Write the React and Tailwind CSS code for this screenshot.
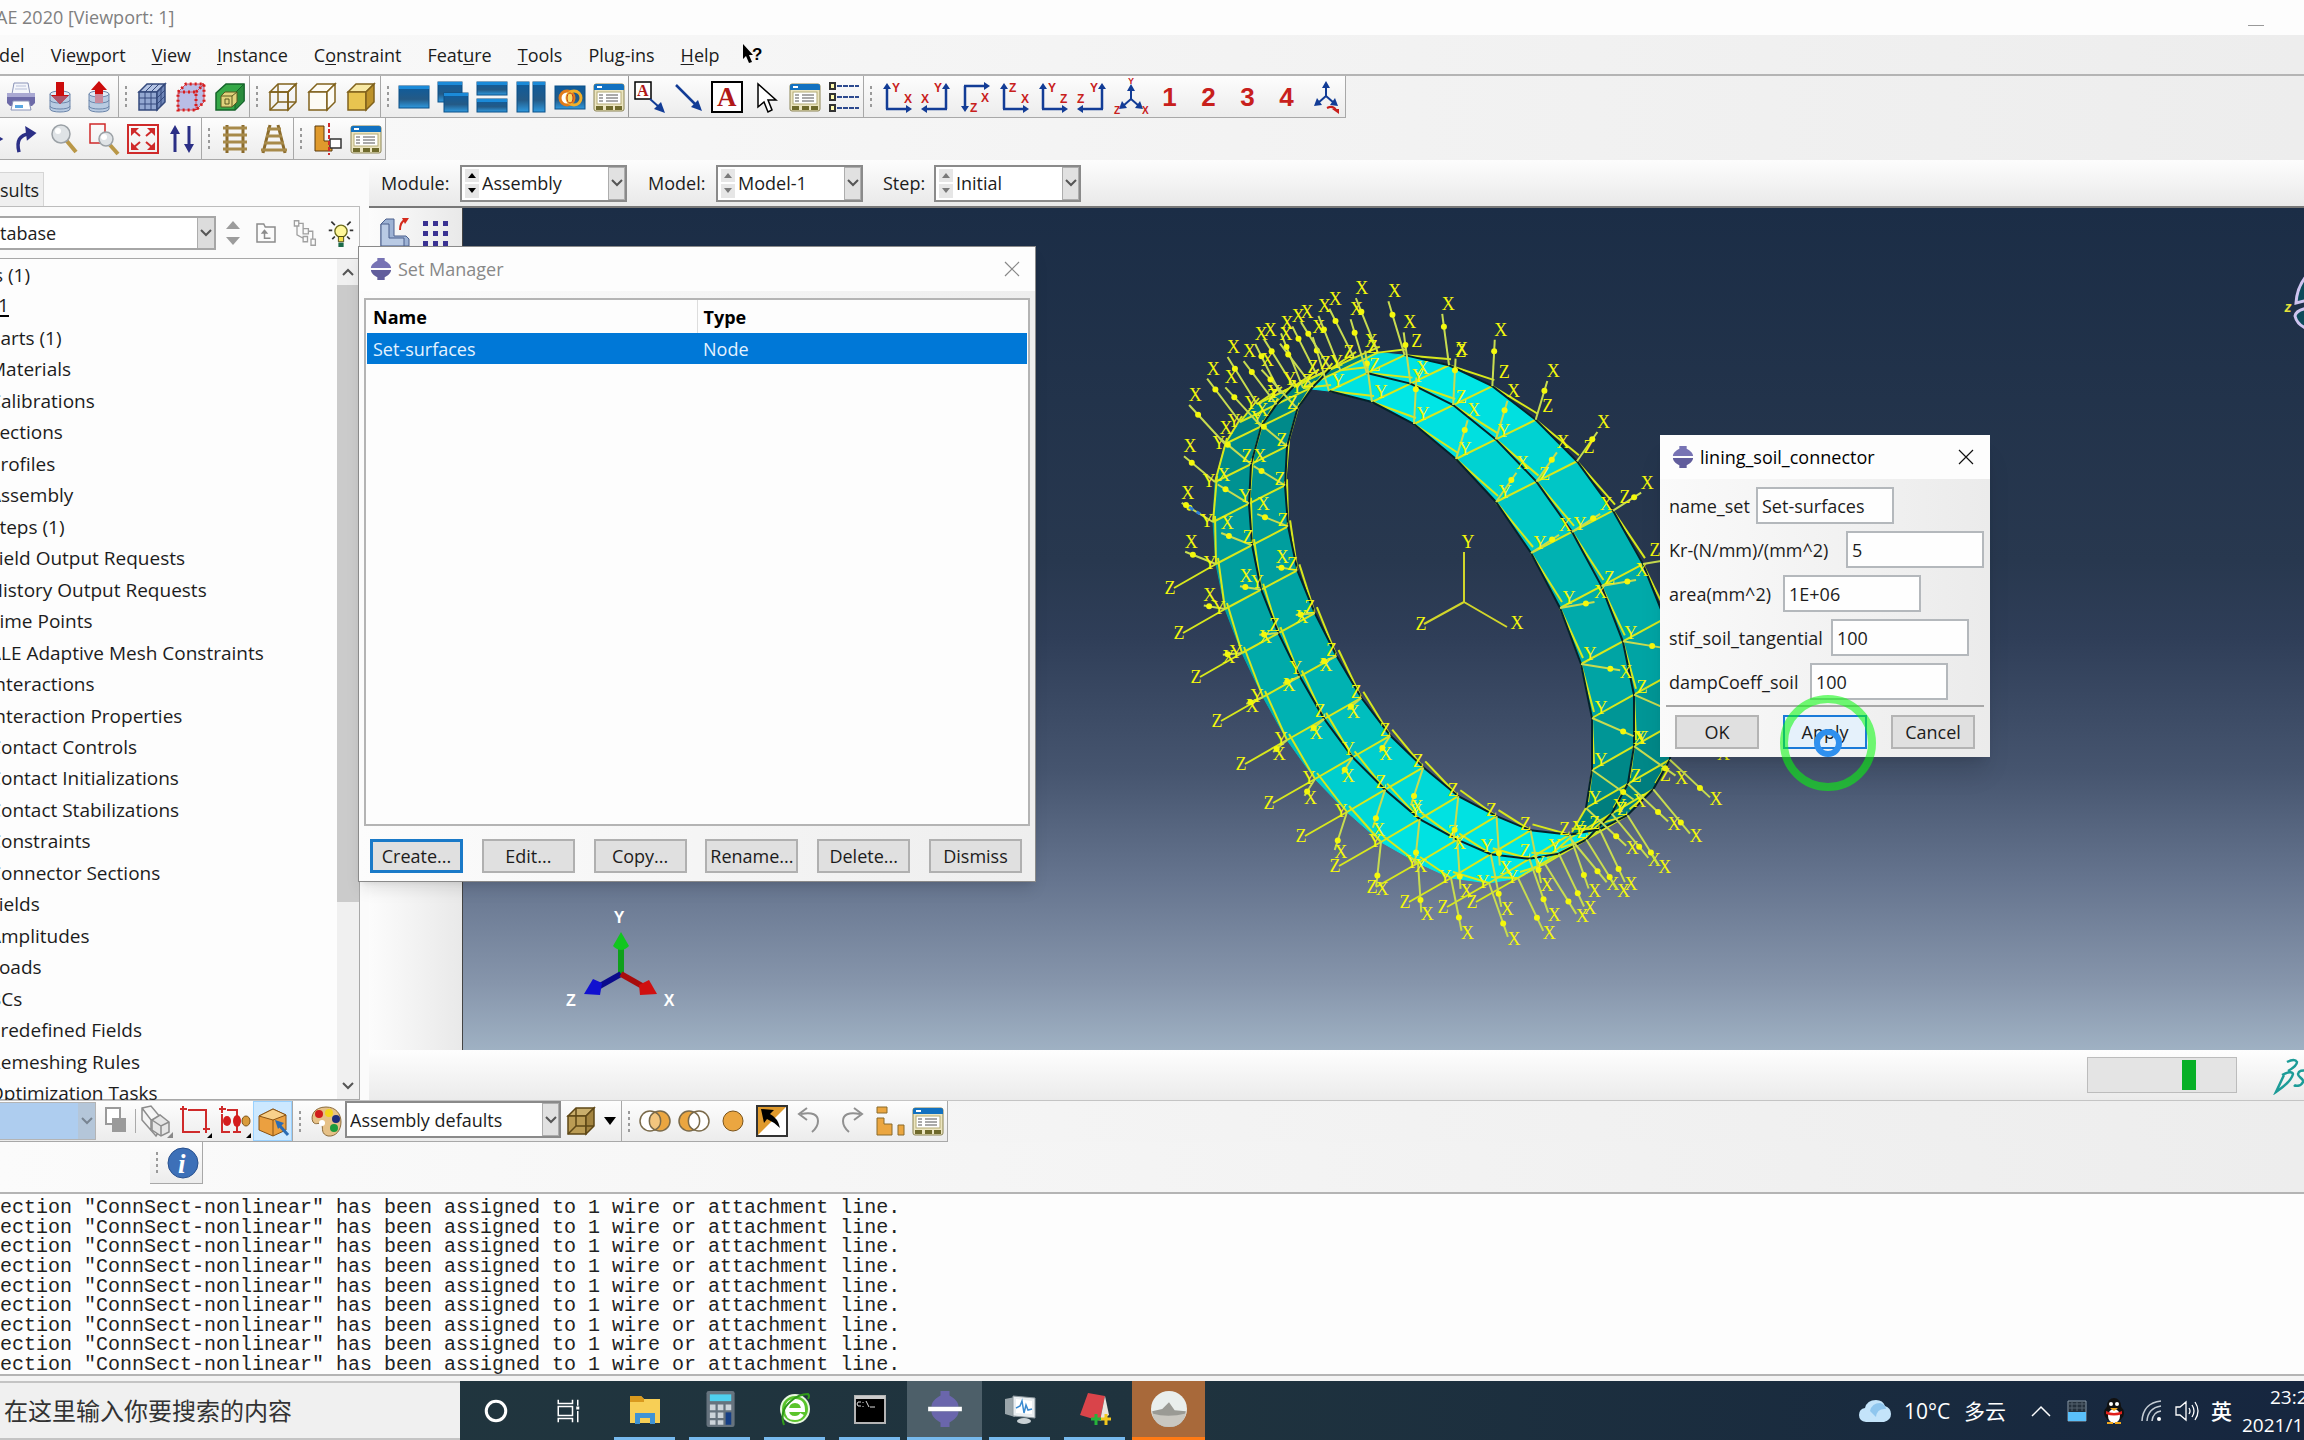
import React from 'react';

const Ico = ({ children, className = 'h-8 w-8' }) => (
    <svg viewBox="0 0 32 32" className={`${className} shrink-0 overflow-visible`} fill="none" aria-hidden="true">
        {children}
    </svg>
);

const ToolButton = ({ label, children, active }) => (
    <button
        type="button"
        aria-label={label}
        className={`flex h-full w-[39px] shrink-0 items-center justify-center ${active ? 'border border-[#99d1ff] bg-[#cce8ff]' : ''}`}
    >
        {children}
    </button>
);

const Grip = () => (
    <div className="flex w-[13px] shrink-0 flex-col items-center justify-center gap-[3px]">
        {[0, 1, 2, 3].map((i) => <span key={i} className="h-[3px] w-[2px] bg-[#9a9a9a]"></span>)}
    </div>
);

const Group = ({ children, grip = true }) => (
    <div className="flex h-full border-r border-b border-[#a8a8a8] bg-gradient-to-b from-[#fdfdfd] to-[#ececec]">
        {grip && <Grip />}
        {children}
    </div>
);

/* ---------- toolbar icons ---------- */

const Printer = () => (
    <Ico>
        <path d="M9 2h14l2 11H7z" fill="#f4f6fb" stroke="#8a93b8" />
        <path d="M11 5h10M10 8h12" stroke="#b8bfd8" />
        <path d="M2 12h28v10l-3 3H5l-3-3z" fill="#6d6aa8" />
        <path d="M2 12h28v4H2z" fill="#a9a8d2" />
        <path d="M8 20h16l2 9H6z" fill="#fff" stroke="#8a93b8" />
        <path d="M10 24h8v3h-8z" fill="#5aa7e0" />
    </Ico>
);

const Disk = ({ up }) => (
    <Ico>
        <path d="M6 13v15c0 4 20 4 20 0V13z" fill="#b9cbe2" stroke="#6c86aa" />
        <ellipse cx="16" cy="13" rx="10" ry="3" fill="#e2ebf6" stroke="#6c86aa" />
        <path d="M6 19c0 4 20 4 20 0M6 25c0 4 20 4 20 0" stroke="#6c86aa" />
        {up ? <path d="M16 0l8 9h-4v12h-8V9H8z" fill="#cc0c0c" /> : <path d="M12 1h8v13h5l-9 9-9-9h5z" fill="#cc0c0c" />}
        {up ? <path d="M12 13h8v9h-8z" fill="#c98a9c" /> : <path d="M8 15h16l-8 8z" fill="#b0546a" />}
    </Ico>
);

const Cube = ({ top, front, side, line, mesh, hidden }) => (
    <Ico>
        <path d="M3 11L11 3h18l-8 8z" fill={top} stroke={line} strokeWidth="1.5" />
        <path d="M3 11h18v18H3z" fill={front} stroke={line} strokeWidth="1.5" />
        <path d="M21 11l8-8v18l-8 8z" fill={side} stroke={line} strokeWidth="1.5" />
        {mesh && <path d="M9 11v18M15 11v18M3 17h18l8-8M3 23h18l8-8M9 11l8-8M15 11l8-8M25 7v18" stroke={line} />}
        {hidden && <path d="M11 3v18h18M11 21l-8 8" stroke={line} strokeWidth="1.5" />}
    </Ico>
);

const RedCube = () => (
    <Ico>
        <path d="M3 11L11 3h18v18l-8 8H3z" fill="#b9bde6" />
        <path d="M3 11L11 3h18v18l-8 8H3zM3 11h18v18M21 11l8-8" stroke="#d64a5a" />
        <path d="M3 11L11 3h18v18l-8 8H3zM3 11h18v18M21 11l8-8" stroke="#d61e1e" strokeWidth="3" strokeDasharray="2 3" />
    </Ico>
);

const GreenCube = () => (
    <Ico>
        <path d="M2 12L12 3h18v17l-9 9H2z" fill="#35a847" stroke="#14632a" strokeWidth="1.5" />
        <path d="M21 12l9-9v17l-9 9z" fill="#2a8c3c" stroke="#14632a" />
        <path d="M7 15l4-4h12v10l-5 5H7z" fill="#e0d27c" stroke="#5a5a20" />
        <path d="M7 15h11v11M18 15l5-4M11 18h4v5h-4z" stroke="#5a5a20" />
    </Ico>
);

const Pane = ({ x, y, w, h }) => (
    <g>
        <rect x={x} y={y} width={w} height={h} fill="url(#paneFill)" stroke="#0a4f86" />
        <rect x={x} y={y} width={w} height="3" fill="#1b8ad8" />
    </g>
);

const TableIcon = () => (
    <Ico>
        <rect x="1" y="3" width="30" height="27" rx="2" fill="#ece5c0" stroke="#8b8455" />
        <path d="M1 9V5q0-2 2-2h26q2 0 2 2v4z" fill="#1271c0" />
        <path d="M4 6h5" stroke="#fff" strokeWidth="2" />
        <rect x="4" y="11" width="24" height="12" fill="#fff" stroke="#b4ab75" />
        <path d="M6 14h4M6 17h4M6 20h4M13 14h12M13 17h12M13 20h12" stroke="#555" />
        <path d="M3 25h7v4H3zM13 25h7v4h-7zM22 25h7v4h-7z" fill="#6f6a2c" />
    </Ico>
);

const Target = () => (
    <Ico>
        <rect x="1" y="5" width="30" height="23" fill="url(#paneFill)" stroke="#0a4f86" />
        <circle cx="13" cy="17" r="7" fill="#fff" stroke="#e07b1a" strokeWidth="3" />
        <circle cx="20" cy="17" r="7" stroke="#f2b02a" strokeWidth="3" />
        <ellipse cx="16" cy="17" rx="3" ry="5" fill="#f9dc6a" stroke="#c23a1a" />
    </Ico>
);

const Letter = ({ x, y, children, size = 12, fill = '#c8201c' }) => (
    <text x={x} y={y} fontSize={size} fontWeight="700" fill={fill} fontFamily='"Liberation Sans", sans-serif'>{children}</text>
);

const axisViews = [
    { d: 'M6 28V6M5 28h22', head: 'M2 8l4-6 4 6zM25 24l6 4-6 4z', l: [['Y', 11, 11], ['X', 23, 22]] },
    { d: 'M26 28V6M27 28H5', head: 'M22 8l4-6 4 6zM7 24l-6 4 6 4z', l: [['Y', 14, 11], ['X', 1, 22]] },
    { d: 'M6 5v22M5 5h22', head: 'M2 25l4 6 4-6zM25 1l6 4-6 4z', l: [['X', 22, 21], ['Z', 11, 31]] },
    { d: 'M6 28V6M5 28h22', head: 'M2 8l4-6 4 6zM25 24l6 4-6 4z', l: [['Z', 11, 11], ['X', 23, 22]] },
    { d: 'M6 28V6M5 28h22', head: 'M2 8l4-6 4 6zM25 24l6 4-6 4z', l: [['Y', 11, 11], ['Z', 23, 22]] },
    { d: 'M26 28V6M27 28H5', head: 'M22 8l4-6 4 6zM7 24l-6 4 6 4z', l: [['Y', 14, 11], ['Z', 1, 22]] },
];

const Magnifier = ({ box }) => (
    <Ico>
        {box && <path d="M2 1h15v19H2z" stroke="#cf2a2a" strokeWidth="1.5" />}
        <path d={box ? 'M22 22l8 9' : 'M17 17l10 12'} stroke="#b99747" strokeWidth="4" />
        <circle cx={box ? 18 : 12} cy={box ? 16 : 11} r={box ? 7 : 9} fill="#dfe3e6" stroke="#9ba1a6" strokeWidth="1.5" />
        <circle cx={box ? 16 : 9} cy={box ? 14 : 8} r="3" fill="#fff" />
    </Ico>
);

const Rails = ({ persp }) => (
    <Ico>
        <path d={persp ? 'M12 2L5 30M20 2l7 28' : 'M8 2v28M24 2v28'} stroke="#8a6a2b" strokeWidth="3" />
        <path d={persp ? 'M9 6h14M8 13h16M6 20h20M3 27h26' : 'M4 5h24M4 12h24M4 19h24M4 26h24'} stroke="#a78a4a" strokeWidth="3" />
    </Ico>
);

const Triad = () => (
    <g>
        <path d="M16 9v9M16 18l-8 7M16 18l8 7" stroke="#123c96" strokeWidth="2" />
        <path d="M12 10l4-7 4 7zM12 27l-8 1 3-8zM20 27l8 1-3-8z" fill="#123c96" />
    </g>
);

const AbaqusMark = ({ className }) => (
    <svg viewBox="0 0 24 24" className={`${className} shrink-0`} aria-hidden="true">
        <path d="M8 0h8v3c4 2 7 5 7 8H1c0-3 3-6 7-8z" fill="#7773b4" />
        <path d="M8 24h8v-3c4-2 7-5 7-8H1c0 3 3 6 7 8z" fill="#615d9c" />
    </svg>
);

const Chevron = ({ className = 'h-2 w-3', up }) => (
    <svg viewBox="0 0 12 8" className={className} fill="none" aria-hidden="true">
        <path d={up ? 'M1 7l5-5 5 5' : 'M1 1l5 5 5-5'} stroke="#555" strokeWidth="2" />
    </svg>
);

const Spin = ({ dim }) => (
    <div className="my-[2px] ml-[3px] flex w-[14px] flex-col gap-[2px]">
        {['M1 6l4-5 4 5z', 'M1 1l4 5 4-5z'].map((d) => (
            <button key={d} type="button" aria-label="Step value" className="flex flex-1 items-center justify-center bg-[#e6e6e6]">
                <svg viewBox="0 0 10 7" className="h-[7px] w-[10px]"><path d={d} fill={dim ? '#7a7a7a' : '#000'} /></svg>
            </button>
        ))}
    </div>
);

const Combo = ({ id, value, width, spin, dim, label }) => (
    <div className={`flex h-[37px] border-2 border-[#8a8a8a] bg-white ${width}`}>
        {spin && <Spin dim={dim} />}
        <select id={id} aria-label={label} className="min-w-0 flex-1 appearance-none bg-transparent pl-[3px] outline-none" defaultValue={value}>
            <option>{value}</option>
        </select>
        <div className="pointer-events-none flex w-[17px] items-center justify-center border border-[#adadad] bg-[#e1e1e1]">
            <Chevron />
        </div>
    </div>
);

/* ---------- chrome ---------- */

const menus = [['Vie', 'w', 'port'], ['', 'V', 'iew'], ['', 'I', 'nstance'], ['C', 'o', 'nstraint'], ['Feat', 'u', 're'], ['', 'T', 'ools'], ['Plu', 'g', '-ins'], ['', 'H', 'elp']];

const MenuBar = () => (
    <nav className="flex h-[39px] shrink-0 items-center gap-[26px] bg-gradient-to-r from-[#fafafa] to-[#ededed]">
        <button type="button" className="-ml-px">del</button>
        {menus.map(([a, u, b]) => (
            <button key={a + u + b} type="button">{a}<span className="underline underline-offset-2">{u}</span>{b}</button>
        ))}
        <button type="button" aria-label="Context help">
            <svg viewBox="0 0 22 24" className="-ml-1 h-6 w-[22px]">
                <path d="M1 1v15l3-3 3 7 3-1-3-7h4z" fill="#000" />
                <text x="10" y="17" fontSize="17" fontWeight="700" fontFamily='"Liberation Sans", sans-serif'>?</text>
            </svg>
        </button>
    </nav>
);

const TopTools = () => (
    <div className="flex h-[44px] border-t-2 border-[#b4b4b4]">
        <Group grip={false}>
            <div className="w-px"></div>
            <ToolButton label="Print"><Printer /></ToolButton>
            <ToolButton label="Save to database"><Disk /></ToolButton>
            <ToolButton label="Load from database"><Disk up /></ToolButton>
        </Group>
        <Group>
            <ToolButton label="Mesh cube"><Cube top="#b4c4e4" front="#93a8d2" side="#6f86b8" line="#34497c" mesh /></ToolButton>
            <ToolButton label="Seeds"><RedCube /></ToolButton>
            <ToolButton label="Section"><GreenCube /></ToolButton>
        </Group>
        <Group>
            <ToolButton label="Wireframe"><Cube line="#80621c" hidden /></ToolButton>
            <ToolButton label="Hidden"><Cube top="#fdfbf4" front="#fdfbf4" side="#fdfbf4" line="#80621c" /></ToolButton>
            <ToolButton label="Shaded"><Cube top="#f7e8a4" front="#e8c450" side="#bd922a" line="#80621c" /></ToolButton>
        </Group>
        <Group>
            <ToolButton label="Single viewport"><Ico><Pane x="1" y="5" w="30" h="22" /></Ico></ToolButton>
            <ToolButton label="Cascade"><Ico><Pane x="1" y="1" w="24" h="20" /><Pane x="7" y="12" w="24" h="19" /></Ico></ToolButton>
            <ToolButton label="Tile horizontally"><Ico><Pane x="1" y="1" w="30" h="13" /><Pane x="1" y="18" w="30" h="13" /></Ico></ToolButton>
            <ToolButton label="Tile vertically"><Ico><Pane x="2" y="1" w="12" h="30" /><Pane x="18" y="1" w="12" h="30" /></Ico></ToolButton>
            <ToolButton label="Link viewports"><Target /></ToolButton>
            <ToolButton label="Viewport manager"><TableIcon /></ToolButton>
            <div className="w-px bg-[#999]"></div>
            <ToolButton label="Text with arrow">
                <Ico>
                    <path d="M2 1h16v17H2z" fill="#fff" stroke="#000" strokeWidth="1.5" />
                    <text x="4" y="15" fontSize="16" fontWeight="700" fill="#b01818" fontFamily='"Liberation Serif", serif'>A</text>
                    <path d="M17 18l9 8" stroke="#123c96" strokeWidth="2" />
                    <path d="M32 32l-4-11-7 7z" fill="#123c96" />
                </Ico>
            </ToolButton>
            <ToolButton label="Arrow"><Ico><path d="M4 4l20 20" stroke="#123c96" strokeWidth="2.5" /><path d="M30 30l-4-11-7 7z" fill="#123c96" /></Ico></ToolButton>
            <ToolButton label="Text">
                <Ico>
                    <path d="M1 1h30v30H1z" fill="#fff" stroke="#000" strokeWidth="2" />
                    <text x="6" y="25" fontSize="27" fontWeight="700" fill="#b01818" fontFamily='"Liberation Serif", serif'>A</text>
                </Ico>
            </ToolButton>
            <ToolButton label="Select"><Ico><path d="M8 3v23l6-5 4 10 4-2-4-10h8z" fill="#fff" stroke="#000" strokeWidth="1.5" /></Ico></ToolButton>
            <ToolButton label="Annotation manager"><TableIcon /></ToolButton>
            <ToolButton label="Legend">
                <Ico>
                    <path d="M2 2h5v6H2zM2 13h5v6H2zM2 24h5v6H2z" fill="#fffbb0" stroke="#333" strokeWidth="2" />
                    <path d="M9 5h22M9 16h22M9 27h22" stroke="#2d4a8f" strokeWidth="2" strokeDasharray="5 1" />
                </Ico>
            </ToolButton>
        </Group>
        <Group>
            {axisViews.map((v, i) => (
                <ToolButton key={i} label={`Plane view ${i + 1}`}>
                    <Ico>
                        <path d={v.d} stroke="#123c96" strokeWidth="2.5" />
                        <path d={v.head} fill="#123c96" />
                        {v.l.map(([c, x, y]) => <Letter key={c} x={x} y={y}>{c}</Letter>)}
                    </Ico>
                </ToolButton>
            ))}
            <ToolButton label="Isometric view">
                <Ico className="h-8 w-8"><Triad /><Letter x="13" y="3" size="9">Y</Letter><Letter x="-1" y="33" size="10">Z</Letter><Letter x="27" y="33" size="10">X</Letter></Ico>
            </ToolButton>
            {[1, 2, 3, 4].map((n) => (
                <button key={n} type="button" className="w-[39px] text-center font-['Liberation_Sans',sans-serif] text-[26px] font-bold text-[#c8201c]">{n}</button>
            ))}
            <ToolButton label="Save view">
                <Ico><g transform="translate(0 -3)"><Triad /></g><path d="M17 27q6-3 9 2" stroke="#c8201c" strokeWidth="2" /><path d="M22 28h7v5z" fill="#c8201c" /></Ico>
            </ToolButton>
        </Group>
    </div>
);

const ViewTools = () => (
    <div className="flex h-[42px]">
        <Group grip={false}>
            <div className="flex w-[6px] items-center"><svg viewBox="0 0 6 8" className="h-2 w-1"><path d="M0 1l5 3-5 3z" fill="#2b2f86" /></svg></div>
            <ToolButton label="Rotate"><Ico className="h-7 w-7"><path d="M8 31Q3 12 20 10" stroke="#2b2f86" strokeWidth="4" /><path d="M15 1l13 8-11 9z" fill="#2b2f86" /></Ico></ToolButton>
            <ToolButton label="Magnify"><Magnifier /></ToolButton>
            <ToolButton label="Box zoom"><Magnifier box /></ToolButton>
            <ToolButton label="Auto-fit">
                <Ico>
                    <path d="M1 2h30v28H1z" stroke="#cf2a2a" strokeWidth="2" />
                    <path d="M4 5h8l-8 8zM28 5h-8l8 8zM4 27h8l-8-8zM28 27h-8l8-8z" fill="#cf2a2a" />
                    <path d="M6 7l7 6M26 7l-7 6M6 25l7-6M26 25l-7-6" stroke="#cf2a2a" strokeWidth="2" />
                </Ico>
            </ToolButton>
            <ToolButton label="Cycle views"><Ico><path d="M9 8v21M23 3v21" stroke="#2b2f86" strokeWidth="3" /><path d="M4 11l5-9 5 9zM18 21l5 9 5-9z" fill="#2b2f86" /></Ico></ToolButton>
        </Group>
        <Group>
            <ToolButton label="Parallel"><Rails /></ToolButton>
            <ToolButton label="Perspective"><Rails persp /></ToolButton>
        </Group>
        <Group>
            <ToolButton label="View cut">
                <Ico><path d="M4 3h9v15h8v10H4z" fill="#e09a2c" stroke="#5a3a0c" /><path d="M19 16h11v9H19z" fill="#fff" stroke="#333" strokeWidth="1.5" /><path d="M18 0v32" stroke="#cf2a2a" strokeWidth="2" strokeDasharray="4 2" /></Ico>
            </ToolButton>
            <ToolButton label="View cut manager"><TableIcon /></ToolButton>
        </Group>
    </div>
);

const tree = ['Parts (1)', 'Materials', 'Calibrations', 'Sections', 'Profiles', 'Assembly', 'Steps (1)', 'Field Output Requests', 'History Output Requests', 'Time Points', 'ALE Adaptive Mesh Constraints', 'Interactions', 'Interaction Properties', 'Contact Controls', 'Contact Initializations', 'Contact Stabilizations', 'Constraints', 'Connector Sections', 'Fields', 'Amplitudes', 'Loads', 'BCs', 'Predefined Fields', 'Remeshing Rules', 'Optimization Tasks'];

const ModelTree = () => (
    <aside className="flex w-[360px] shrink-0 flex-col overflow-hidden bg-[#fbfbfb] pt-3">
        <button type="button" className="h-[34px] w-11 border-t border-r border-[#d5d5d5] bg-[#efefef] text-left">sults</button>
        <div className="flex h-[52px] shrink-0 items-center border-t border-r border-[#bcbcbc]">
            <div className="flex h-[34px] w-[216px] shrink-0 border-2 border-l-0 border-[#a6a6a6] bg-white">
                <select aria-label="Tree source" className="min-w-0 flex-1 appearance-none bg-transparent outline-none" defaultValue="tabase">
                    <option>tabase</option>
                </select>
                <div className="pointer-events-none flex w-[17px] items-center justify-center border-l border-[#adadad] bg-[#dcdcdc]"><Chevron /></div>
            </div>
            <button type="button" aria-label="Step tree source" className="w-[33px]">
                <svg viewBox="0 0 33 32" className="h-8 w-[33px]"><path d="M10 12l7-8 7 8zM10 20l7 8 7-8z" fill="#9c9c9c" /></svg>
            </button>
            <button type="button" aria-label="Up one level" className="w-[34px]">
                <Ico className="mx-auto h-6 w-6"><path d="M4 8V4h9l2 4h13v20H4z" stroke="#8c8c8c" strokeWidth="2" /><path d="M14 13v10h8" stroke="#8c8c8c" strokeWidth="2" /><path d="M9 17l5-6 5 6z" fill="#8c8c8c" /></Ico>
            </button>
            <button type="button" aria-label="Show hierarchy" className="w-[41px]">
                <Ico className="mx-auto h-7 w-7"><path d="M5 2h5v6H5zM15 11h6v6h-6zM24 23h5v7h-5zM15 20h5v6h-5zM8 8v10l7 4M10 5h5v6M21 14h5v9" stroke="#a0a0a0" strokeWidth="1.5" /></Ico>
            </button>
            <button type="button" aria-label="Tip" className="w-[34px]">
                <Ico className="mx-auto h-7 w-7"><circle cx="16" cy="14" r="7" fill="#fff79a" stroke="#6b6a1a" strokeWidth="1.5" /><path d="M13 20h6v6h-6z" fill="#f5e14a" stroke="#3c3c10" /><path d="M13 27h6v5h-6z" fill="#1c6b4a" /><path d="M5 3l4 4M27 3l-4 4M2 13h4M26 13h4M6 23l3-3M26 23l-3-3" stroke="#333" strokeWidth="2" /></Ico>
            </button>
        </div>
        <div className="flex min-h-0 flex-1 border-y border-r border-[#a8a8a8] bg-[#fdfdfd]">
            <ul className="flex h-[850px] flex-1 flex-col text-[19px] whitespace-nowrap">
                <li className="-ml-[6px] flex flex-1 items-center">s (1)</li>
                <li className="-ml-[2px] flex flex-1 items-center"><span className="border-b-2 border-black leading-[20px]">1</span></li>
                {tree.map((t) => <li key={t} className="-ml-[11px] flex flex-1 items-center">{t}</li>)}
            </ul>
            <div className="flex w-[22px] flex-col bg-[#f0f0f0]">
                <button type="button" aria-label="Scroll up" className="flex h-[26px] items-center justify-center"><Chevron up /></button>
                <div className="h-[617px] bg-[#cbcbcb]"></div>
                <button type="button" aria-label="Scroll down" className="mt-auto flex h-[26px] items-center justify-center"><Chevron /></button>
            </div>
        </div>
    </aside>
);

/* ---------- ring model ---------- */

const nodesA = [
    [1329, 391], [1372, 402], [1414, 424], [1456, 459], [1496, 502], [1531, 553], [1560, 608], [1581, 664],
    [1592, 718], [1592, 770], [1586, 808], [1570, 838], [1545, 864], [1518, 878], [1489, 883], [1451, 878],
    [1418, 863], [1381, 842], [1347, 812], [1315, 779], [1287, 740], [1263, 697], [1242, 653], [1225, 609],
    [1216, 564], [1213, 522], [1215, 482], [1225, 444], [1240, 422], [1257, 404], [1280, 393], [1303, 388],
];
const shade = [226, 230, 224, 210, 198, 178, 170, 164, 150, 136, 126, 128, 228, 230, 230, 228, 226, 216, 206, 190, 178, 170, 164, 158, 154, 146, 138, 130, 128, 128, 128, 220];

// shift every node along the ring axis, slightly longer on the near side
const along = (k) => nodesA.map(([x, y]) => {
    const u = (x - 1213) / 380;
    const v = (y - 390) / 494;
    return [x + k * (36 + 6 * u), y - k * (17 + 5 * v + 3 * u)];
});
const rings = [nodesA, along(1), along(2)];
const pts = (list) => list.map((p) => p.join(',')).join(' ');

// radial axis lengths seen around the ring
const radial = (i) => {
    if (i > 18 && i < 24) return 26;
    if (i > 23 && i < 27) return 36;
    if (i > 26 && i < 31) return 44;
    return 48;
};

const Mark = ({ x, y, children }) => <text x={x} y={y} fontSize="18" textAnchor="middle">{children}</text>;

const RingModel = () => {
    const [a, b, c] = rings;
    const order = [28, 29, 30, 27, 26, 25, 24, 23, 22, 21, 20, 19, 10, 11, 9, 8, 7, 6, 5, 4, 3, 2, 1, 0, 31, 18, 17, 16, 15, 14, 13, 12];
    return (
        <g>
            {order.map((i) => {
                const j = (i + 1) % 32;
                const g = shade[i];
                return <polygon key={i} points={pts([a[i], c[i], c[j], a[j]])} fill={`rgb(0,${g},${g})`} stroke={`rgb(0,${g},${g})`} />;
            })}
            <g stroke="#d8e81c" strokeWidth="2" fill="none">
                {rings.map((ring, r) => ring.map(([x, y], i) => {
                    const n = ring[(i + 1) % 32];
                    return <path key={`${r}-${i}`} d={`M${x} ${y}L${n[0] + 2} ${n[1] - 6}`} />;
                }))}
                {a.map((p, i) => <polyline key={i} points={pts([p, b[i], c[i]])} />)}
                {a.map(([x, y], i) => (i > 12 && i < 25 ? <path key={i} d={`M${x} ${y}l-42 24`} /> : null))}
            </g>
            <g fill="none" stroke="#04222a" strokeWidth="2">
                <polyline points={pts(a.slice(0, 11))} />
                <polyline points={pts(b.slice(0, 30))} />
                <polyline points={pts(c.slice(0, 30))} />
            </g>
            <g fill="#f4f80c" fontFamily='"Liberation Serif", serif'>
                {rings.map((ring, r) => ring.map(([x, y], i) => {
                    const cos = (a[i][0] - 1403) / 190;
                    const yy = (a[i][1] - 637 - 108 * cos) / 220;
                    const len = radial(i);
                    const dx = cos * 0.87 * len;
                    const dy = (0.5 * cos + yy) * len;
                    return (
                        <g key={`${r}-${i}`}>
                            <path d={`M${x} ${y}l${dx} ${dy}`} stroke="#c8dc50" strokeWidth="2" />
                            <circle cx={x + dx * 0.75} cy={y + dy * 0.75} r="3" />
                            <Mark x={x + dx + 6} y={y + dy + (dy < 0 ? -4 : 8)}>X</Mark>
                            {r === 0 && <Mark x={x + (i < 12 ? 9 : -6)} y={y + (i < 12 ? -4 : 5)}>Y</Mark>}
                            {r === 1 && <Mark x={x + (i < 12 ? 8 : -4)} y={y - 2}>{i % 2 ? 'Y' : 'Z'}</Mark>}
                            {r === 2 && <Mark x={x + (i < 12 ? 12 : -5)} y={y + (i < 12 ? -8 : 0)}>Z</Mark>}
                        </g>
                    );
                }))}
                {a.map(([x, y], i) => (i > 12 && i < 25 ? <Mark key={i} x={x - 46} y={y + 30}>Z</Mark> : null))}
            </g>
        </g>
    );
};

const Viewport = () => (
    <div className="min-w-0 flex-1 overflow-hidden border-l border-[#444] bg-[linear-gradient(#1b2d46_0%,#28384f_42%,#2f3e58_51%,#46556f_67%,#66758f_80%,#8695ab_92%,#9fb1c3_100%)]">
        <svg viewBox="463 208 1841 842" className="block h-full w-full">
            <RingModel />
            <path d="M1464 602V552M1464 602l43 25M1464 602l-40 22" stroke="#d2d62a" strokeWidth="2" fill="none" />
            <g fill="#f4f80c" fontFamily='"Liberation Serif", serif' fontSize="18" textAnchor="middle">
                <text x="1468" y="548">Y</text>
                <text x="1517" y="629">X</text>
                <text x="1421" y="630">Z</text>
            </g>
            <g>
                <circle cx="1186" cy="505" r="3" fill="#f4f80c" />
                <path d="M1189 507l11 7" stroke="#2f7fd8" strokeWidth="3" strokeDasharray="5 4" />
            </g>
            <g>
                <path d="M621 974v-32" stroke="#0fa01c" strokeWidth="6" />
                <path d="M613 946l8-14 8 14q-8 8-16 0z" fill="#12c61f" />
                <path d="M621 974l-23 13" stroke="#0b0b8c" strokeWidth="6" />
                <path d="M584 994l9-15 9 4-2 12z" fill="#1010d0" />
                <path d="M621 974l23 13" stroke="#a80c0c" strokeWidth="6" />
                <path d="M657 994l-8-14-10 5 1 10z" fill="#d01010" />
                <g fill="#fff" fontFamily='"Liberation Sans", sans-serif' fontWeight="700" fontSize="16" textAnchor="middle">
                    <text x="619" y="923">Y</text>
                    <text x="571" y="1006">Z</text>
                    <text x="669" y="1006">X</text>
                </g>
            </g>
            <g stroke="#cfc4f0" strokeWidth="3" fill="#0d4a5a">
                <path d="M2308 274q-11 12-12 29l12-3z" />
                <path d="M2308 308q-12 2-13 8 2 9 13 13z" />
            </g>
            <text x="2288" y="312" fontSize="14" fontWeight="700" fontStyle="italic" fill="#e6e23a" textAnchor="middle" fontFamily='"Liberation Sans", sans-serif'>z</text>
        </svg>
    </div>
);

const Workspace = () => (
    <section className="ml-[9px] flex min-w-0 flex-1 flex-col">
        <div className="flex h-12 items-center border-b-2 border-[#777] bg-gradient-to-b from-[#fdfdfd] to-[#e9e9e9] pl-3">
            <label htmlFor="module" className="w-[79px]">Module:</label>
            <Combo id="module" value="Assembly" width="w-[167px]" spin />
            <label htmlFor="model" className="w-[89px] pl-[21px]">Model:</label>
            <Combo id="model" value="Model-1" width="w-[147px]" spin dim />
            <label htmlFor="step" className="w-[71px] pl-5">Step:</label>
            <Combo id="step" value="Initial" width="w-[147px]" spin dim />
        </div>
        <div className="flex min-h-0 flex-1">
            <div className="flex w-[93px] shrink-0 items-start gap-2 bg-gradient-to-r from-[#fcfcfc] to-[#e9e9e9] pt-2 pl-[10px]">
                <button type="button" aria-label="Create instance">
                    <Ico><path d="M2 8l5-5h8v17h12l3 3v7H2z" fill="#9db2d4" stroke="#4a5f8c" /><path d="M2 8h8v14h15v8H2z" fill="#b9cae4" stroke="#4a5f8c" /><path d="M21 14q0-8 5-10" stroke="#d42a1c" strokeWidth="2" /><path d="M23 2h7l-4 6z" fill="#d42a1c" /></Ico>
                </button>
                <button type="button" aria-label="Linear pattern">
                    <Ico><path d="M4 5h5v5H4zM14 5h5v5h-5zM24 5h5v5h-5zM4 15h5v5H4zM14 15h5v5h-5zM24 15h5v5h-5zM4 25h5v5H4zM14 25h5v5h-5zM24 25h5v5h-5z" fill="#3a3292" /></Ico>
                </button>
            </div>
            <Viewport />
        </div>
        <div className="flex h-[50px] shrink-0 items-center justify-end bg-gradient-to-b from-[#fefefe] to-[#ebebeb]">
            <div role="progressbar" aria-label="Working" className="flex h-9 w-[150px] border border-[#bcbcbc] bg-[#e4e4e4] py-[2px] pl-[94px]">
                <div className="w-[14px] bg-[#06b025]"></div>
            </div>
            <svg viewBox="0 0 31 40" className="ml-9 h-10 w-[31px]" fill="none" stroke="#1d9c98" strokeWidth="2.5">
                <path d="M14 7q8-4 10 0 0 4-9 9M9 20q10-5 11-1-2 8-17 18L11 20M35 16q-9-2-10 3c0 4 6 4 5 8-2 5-8 4-9 3" />
            </svg>
        </div>
    </section>
);

const Circles = ({ left, right, fill, both }) => (
    <Ico>
        {both ? <circle cx="16" cy="16" r="10" fill="#eba640" stroke="#7a531a" /> : (
            <g stroke="#7a6a4a" strokeWidth="1.5">
                <circle cx="11" cy="16" r="10" fill={left} />
                <circle cx="21" cy="16" r="10" fill={right} />
                <path d="M16 7a10 10 0 0 1 0 18a10 10 0 0 1 0-18" fill={fill} />
            </g>
        )}
    </Ico>
);

const BottomTools = () => (
    <div className="flex h-[42px] shrink-0 border-t border-[#c4c4c4] bg-gradient-to-r from-[#fafafa] to-[#ededed]">
        <Group grip={false}>
            <div className="my-px flex w-[96px] border border-l-0 border-[#b4b4b4] bg-[#aecdef]">
                <select aria-label="Selection filter" disabled className="min-w-0 flex-1 appearance-none" defaultValue=""><option value="" label=" "></option></select>
                <div className="flex w-[17px] items-center justify-center bg-[#b9c3cc] opacity-60"><Chevron /></div>
            </div>
            <ToolButton label="Highlight"><Ico><path d="M6 3h14v16H6z" fill="#fff" stroke="#9a9a9a" strokeWidth="2" /><path d="M12 13h14v14H12z" fill="#9a9a9a" /></Ico></ToolButton>
            <div className="my-2 w-px bg-[#aaa]"></div>
            <ToolButton label="Drag shape"><Ico><path d="M2 3l9-2 10 12v10l-5 8L2 15zM2 3l9 12 10-2M11 15v11" fill="#f4f4f4" stroke="#8c8c8c" strokeWidth="1.5" /><path d="M12 15l8-5 9 7v10l-8 4-9-6z" fill="#e6e6e6" stroke="#8c8c8c" strokeWidth="1.5" /><path d="M12 15l9 6 8-4M21 21v10" stroke="#8c8c8c" strokeWidth="1.5" /><path d="M33 27v6h-6z" fill="#888" /></Ico></ToolButton>
            <ToolButton label="Select inside"><Ico><path d="M4 7v20h17M9 5h18v15" stroke="#cf2a2a" strokeWidth="2" /><path d="M1 4h7M4 1v7M24 24h7M27 20v8" stroke="#cf2a2a" strokeWidth="2" /><path d="M33 28v5h-5z" fill="#000" /></Ico></ToolButton>
            <ToolButton label="Select crossing"><Ico><path d="M4 9v18h8M9 5h10v22" stroke="#cf2a2a" strokeWidth="2" /><path d="M1 4h7M4 1v7M15 27h8" stroke="#cf2a2a" strokeWidth="2" /><ellipse cx="9" cy="16" rx="4" ry="5" fill="#d41c1c" /><ellipse cx="19" cy="16" rx="4" ry="6" fill="#d41c1c" /><ellipse cx="28" cy="16" rx="4" ry="5" fill="#d99b3a" stroke="#7a531a" /><path d="M33 28v5h-5z" fill="#000" /></Ico></ToolButton>
            <ToolButton label="Select exterior" active><Ico><path d="M2 11l14-7 13 6v15l-13 6-14-6z" fill="#eba040" stroke="#8a5212" /><path d="M2 11l14 4 13-5-13-6z" fill="#f8d08a" stroke="#8a5212" /><path d="M16 15v16" stroke="#8a5212" /><path d="M23 21l8 9" stroke="#2a6cb4" strokeWidth="3" /><path d="M18 15l9 3-6 6z" fill="#2a6cb4" /></Ico></ToolButton>
        </Group>
        <Group>
            <ToolButton label="Color code">
                <Ico><path d="M16 2C4 2 0 11 3 17c3 4 7-1 9 3 1 4-1 9 6 11 8 1 13-6 13-14S26 2 16 2z" fill="#e6c187" stroke="#8a6a3a" /><circle cx="9" cy="9" r="4" fill="#d01c1c" /><circle cx="19" cy="8" r="4" fill="#f4d41c" /><circle cx="26" cy="14" r="4" fill="#1c2c7c" /><circle cx="24" cy="23" r="4" fill="#1c9c3c" /><circle cx="12" cy="18" r="3" fill="#fff" /></Ico>
            </ToolButton>
            <Combo label="Color mapping" value="Assembly defaults" width="w-[216px]" />
            <ToolButton label="Translucency"><Cube top="#c9ae6c" front="#bb9c54" side="#a38440" line="#5e4716" hidden /></ToolButton>
            <button type="button" aria-label="Translucency options" className="flex w-[21px] items-center"><svg viewBox="0 0 12 8" className="ml-1 h-2 w-3"><path d="M0 0h12L6 8z" fill="#000" /></svg></button>
        </Group>
        <Group>
            <ToolButton label="Intersect"><Circles left="#fff" right="#eba640" fill="#f2c57e" /></ToolButton>
            <ToolButton label="Remove"><Circles left="#eba640" right="#fff" fill="#fff" /></ToolButton>
            <ToolButton label="Replace"><Circles both /></ToolButton>
            <ToolButton label="Replace all"><Ico><path d="M1 1h30v30H1z" fill="#e09a2c" stroke="#333" strokeWidth="2" /><path d="M2 30L30 2v28z" fill="#fff" /><path d="M5 4l13 1-4 4q8 4 10 14-6-6-13-9l-3 4z" fill="#000" /></Ico></ToolButton>
            <ToolButton label="Undo"><Ico><path d="M6 9q17-3 17 7 0 6-6 11" stroke="#909090" strokeWidth="2" /><path d="M12 3L4 9l8 6" stroke="#909090" strokeWidth="2" /></Ico></ToolButton>
            <ToolButton label="Redo"><Ico><path d="M26 9Q9 6 9 16q0 6 6 11" stroke="#909090" strokeWidth="2" /><path d="M20 3l8 6-8 6" stroke="#909090" strokeWidth="2" /></Ico></ToolButton>
            <ToolButton label="Part groups"><Ico><path d="M4 2h10v6H4zM4 13h7v6h8v11H4zM25 20h6v10h-6z" fill="#eba640" stroke="#8a6a2a" /></Ico></ToolButton>
            <ToolButton label="Display group manager"><TableIcon /></ToolButton>
        </Group>
    </div>
);

const MessageArea = () => (
    <div className="mb-[5px] flex h-[184px] shrink-0 flex-col border-y-2 border-[#b4b4b4] bg-[#fdfdfd] pt-1 font-['Liberation_Mono',monospace] text-[20px] text-[#222]">
        {Array.from({ length: 9 }, (_, i) => (
            <p key={i} className="flex min-h-0 flex-1 items-center leading-[19px] whitespace-pre">ection "ConnSect-nonlinear" has been assigned to 1 wire or attachment line.</p>
        ))}
    </div>
);

/* ---------- dialogs ---------- */

const CloseIcon = ({ color }) => (
    <svg viewBox="0 0 16 16" className="h-4 w-4" fill="none"><path d="M1 1l14 14M15 1L1 15" stroke={color} strokeWidth="1.2" /></svg>
);

const SetManager = () => (
    <div role="dialog" aria-label="Set Manager" className="absolute top-[246px] left-[358px] flex h-[636px] w-[678px] flex-col border border-[#8a8a8a] bg-gradient-to-r from-[#fcfcfc] to-[#eeeeee] shadow-lg">
        <div className="flex h-11 shrink-0 items-center bg-[#fdfdfd] px-[11px] text-[#888]">
            <AbaqusMark className="h-[22px] w-[22px]" />
            <span className="ml-[6px] flex-1">Set Manager</span>
            <button type="button" aria-label="Close" className="mr-1"><CloseIcon color="#888" /></button>
        </div>
        <div className="mx-[5px] mt-[7px] flex-1 border-2 border-[#b4b4b4] bg-[#fdfdfd] px-px">
            <table className="w-full table-fixed border-collapse text-left">
                <thead>
                    <tr className="h-[33px]">
                        <th className="w-1/2 border-r border-[#ddd] pl-[6px] text-black">Name</th>
                        <th className="pl-[6px] text-black">Type</th>
                    </tr>
                </thead>
                <tbody>
                    <tr className="h-[31px] bg-[#0078d7] text-[#e4f2ff]">
                        <td className="pl-[6px]">Set-surfaces</td>
                        <td className="pl-[6px]">Node</td>
                    </tr>
                </tbody>
            </table>
        </div>
        <div className="flex h-[55px] shrink-0 items-start justify-between pt-[13px] pr-[13px] pl-[11px]">
            {['Create...', 'Edit...', 'Copy...', 'Rename...', 'Delete...', 'Dismiss'].map((t, i) => (
                <button key={t} type="button" className={`h-[34px] w-[93px] bg-[#e0e0e0] whitespace-nowrap ${i === 0 ? 'border-[3px] border-[#1a7ac8]' : 'border-2 border-[#b0b0b0]'}`}>{t}</button>
            ))}
        </div>
    </div>
);

const fields = [
    ['name_set', 'Set-surfaces', 'w-[87px]'],
    ['Kr-(N/mm)/(mm^2)', '5', 'w-[177px]'],
    ['area(mm^2)', '1E+06', 'w-[114px]'],
    ['stif_soil_tangential', '100', 'w-[162px]'],
    ['dampCoeff_soil', '100', 'w-[141px]'],
];

const ConnectorDialog = () => (
    <div role="dialog" aria-label="lining_soil_connector" className="absolute top-[435px] left-[1660px] w-[330px] bg-gradient-to-r from-[#fafafa] to-[#ebebeb] shadow-xl">
        <div className="flex h-11 items-center bg-[#fdfdfd] px-3 text-black">
            <AbaqusMark className="h-[22px] w-[22px]" />
            <span className="ml-[6px] flex-1">lining_soil_connector</span>
            <button type="button" aria-label="Close" className="mr-1"><CloseIcon color="#111" /></button>
        </div>
        <form className="pb-2" onSubmit={(e) => e.preventDefault()}>
            <div className="flex flex-col gap-[7px] pt-2 pb-[5px] pl-[9px]">
                {fields.map(([name, value, w]) => (
                    <div key={name} className="flex items-center">
                        <label htmlFor={name} className={`${w} whitespace-nowrap`}>{name}</label>
                        <input id={name} defaultValue={value} className="h-[37px] w-[138px] border-2 border-[#b4b8bc] bg-[#fefefe] px-1 outline-none" />
                    </div>
                ))}
            </div>
            <hr className="mx-[6px] border-t-2 border-[#a8a8a8]" />
            <div className="mt-2 flex justify-between px-[15px]">
                <button type="button" className="h-[34px] w-[84px] border-2 border-[#b4b4b4] bg-[#e0e0e0]">OK</button>
                <button type="button" className="h-[34px] w-[84px] border-2 border-[#1a7ad8] bg-[#e5f1fb]">Apply</button>
                <button type="button" className="h-[34px] w-[84px] border-2 border-[#b4b4b4] bg-[#e0e0e0]">Cancel</button>
            </div>
        </form>
    </div>
);

const BusyCursor = () => (
    <svg viewBox="0 0 96 96" className="pointer-events-none absolute top-[695px] left-[1780px] h-24 w-24" fill="none">
        <circle cx="48" cy="48" r="44" stroke="rgba(8,249,14,0.57)" strokeWidth="8" />
        <circle cx="48" cy="48" r="11" stroke="#2f90ee" strokeWidth="6" />
    </svg>
);

/* ---------- taskbar ---------- */

const tasks = [
    { name: 'File Explorer', icon: <><path d="M1 3h11l3 3h16v24H1z" fill="#f7cf56" /><path d="M1 3h11l3 3v3H1z" fill="#d99a1e" /><path d="M6 31V20h20v11h-5v-6H11v6z" fill="#3f93d4" /></> },
    { name: 'Calculator', icon: <><rect x="4" y="0" width="25" height="32" rx="2" fill="#66737e" /><path d="M7 3h19v6H7z" fill="#4fd0ee" /><path d="M7 12h5v5H7zM14 12h5v5h-5zM21 12h5v5h-5zM7 19h5v5H7zM14 19h5v5h-5zM7 26h5v4H7zM14 26h5v4h-5z" fill="#ccd4da" /><path d="M21 19h5v11h-5z" fill="#163f86" /></> },
    { name: 'Browser', icon: <><circle cx="16" cy="16" r="14" fill="#5ac42c" stroke="#e8f8e0" strokeWidth="2" /><path d="M8 17h16q0-9-8-9-8 0-8 9 0 8 8 8 5 0 7-4" stroke="#fff" strokeWidth="4" /><path d="M5 32Q0 18 12 8 20 1 29 1q2 2 0 5" stroke="#2f9a1a" strokeWidth="2" /></> },
    { name: 'Command Prompt', icon: <><path d="M1 3h30v27H1z" fill="#000" stroke="#b4b4b4" strokeWidth="2" /><path d="M1 3h30v3H1z" fill="#ccc" /><path d="M7 9q-4-1-4 2t4 2M9 9v1M9 13v1M12 8l3 6M16 14h5" stroke="#ddd" /></> },
    { name: 'Abaqus', active: true, icon: <><path d="M12 0h8v4c5 3 8 6 8 10H4c0-4 3-7 8-10zM12 32h8v-4c5-3 8-6 8-10H4c0 4 3 7 8 10z" fill="#6a66ac" /><path d="M1 14h30v4H1z" fill="#fff" /></> },
    { name: 'Monitor', icon: <><path d="M1 6l10-2v20l-10-3z" fill="#9aa5aa" /><path d="M9 3l22 2v20l-22-2z" fill="#e8edf0" stroke="#8d989e" /><path d="M12 6l16 2v13l-16-1z" fill="#fff" /><path d="M12 15l4-2 2-5 2 12 2-8 2 5 4-1" stroke="#3a8ad0" strokeWidth="1.5" /><ellipse cx="20" cy="28" rx="7" ry="3" fill="#c9d1d5" /></> },
    { name: 'Notebook', icon: <><path d="M9 0l17 3-5 25-20-6z" fill="#d9444a" /><path d="M26 3l4 19-9 6z" fill="#e9e4de" /><path d="M17 21v11M12 26h10" stroke="#25b43a" strokeWidth="3" /><path d="M27 21v11M22 26h10" stroke="#f2c71c" strokeWidth="3" /></> },
];

const Taskbar = () => (
    <footer className="flex h-[59px] shrink-0 overflow-hidden bg-gradient-to-r from-[#21363e] via-[#1f333e] to-[#16263f]">
        <input
            aria-label="搜索"
            placeholder="在这里输入你要搜索的内容"
            className="w-[460px] border-y-2 border-[#c4c4c4] bg-[#f0f0f0] pl-1 text-[24px] outline-none placeholder:text-[#333]"
        />
        <button type="button" aria-label="Cortana" className="flex w-[72px] items-center justify-center"><Ico className="h-6 w-6"><circle cx="16" cy="16" r="13" stroke="#fff" strokeWidth="4" /></Ico></button>
        <button type="button" aria-label="Task view" className="flex w-[75px] items-center justify-center pr-1">
            <Ico className="h-6 w-6"><path d="M3 1v5h19V1M3 31v-5h19v5M3 10h19v12H3zM29 1v8M29 16v15" stroke="#fff" strokeWidth="2" /><path d="M27 10h4v4h-4z" fill="#fff" /></Ico>
        </button>
        {tasks.map((t) => (
            <button key={t.name} type="button" aria-label={t.name} className={`flex w-[75px] flex-col items-center ${t.active ? 'bg-[#4d5f69]' : ''}`}>
                <span className="flex flex-1 items-center"><Ico className={t.name === 'Calculator' || t.active ? 'h-9 w-9' : 'h-8 w-8'}>{t.icon}</Ico></span>
                <span className={`h-[3px] bg-[#76b9ed] ${t.active ? 'w-full' : 'w-[61px]'}`}></span>
            </button>
        ))}
        <button type="button" aria-label="Recorder" className="flex w-[73px] flex-col items-center bg-[#a8693a]">
            <span className="flex flex-1 items-center"><Ico className="h-9 w-9"><circle cx="16" cy="16" r="16" fill="#e9eeec" /><path d="M1 18l9-2 6-6 5 7 10 1q-2 14-15 14T1 18z" fill="#9a9a94" /><path d="M1 20q14 4 30 0-3 12-15 12T1 20z" fill="#c9c7c0" /></Ico></span>
            <span className="h-[3px] w-full bg-[#ff7a14]"></span>
        </button>
        <div className="ml-auto flex items-center text-[21px] whitespace-nowrap text-white">
            <svg viewBox="0 0 34 24" className="h-6 w-[34px]"><path d="M8 23q-7-1-7-7 0-6 6-7 2-8 11-8 7 0 9 6 6 2 6 8t-7 8z" fill="#c4e4fa" /><path d="M12 12q2-8 10-8 5 1 6 6-9-1-10 8z" fill="#8fc6ee" /></svg>
            <span className="ml-3 w-[60px]">10°C</span>
            <span className="w-[65px]">多云</span>
            <svg viewBox="0 0 20 12" className="ml-[2px] h-3 w-5" fill="none"><path d="M1 11l9-9 9 9" stroke="#fff" strokeWidth="1.5" /></svg>
            <svg viewBox="0 0 20 22" className="ml-4 h-[22px] w-5"><path d="M1 1h18v20H1z" fill="#24303c" stroke="#8a9aa8" /><path d="M1 4h18M1 8h18M5 1v10M10 1v10M15 1v10" stroke="#55626e" /><path d="M1 12h18v9H1z" fill="#5ac0fa" /></svg>
            <svg viewBox="0 0 22 26" className="ml-4 h-[26px] w-[22px]"><ellipse cx="11" cy="15" rx="10" ry="9" fill="#111" /><ellipse cx="11" cy="8" rx="7" ry="8" fill="#111" /><ellipse cx="11" cy="18" rx="6" ry="7" fill="#fff" /><path d="M3 13q8 4 16 0v3q-8 3-16 0z" fill="#e0201c" /><circle cx="8" cy="6" r="2" fill="#fff" /><circle cx="14" cy="6" r="2" fill="#fff" /><path d="M7 10h8l-4 3zM4 24h6v2H4zM12 24h6v2h-6z" fill="#f2a81c" /></svg>
            <svg viewBox="0 0 22 22" className="ml-4 h-[22px] w-[22px]" fill="none" stroke="#c4ccd4" strokeWidth="1.5"><path d="M1 21Q2 3 20 1M6 21Q7 8 20 6M11 21q1-9 9-10" /><circle cx="18" cy="19" r="2" fill="#fff" stroke="none" /></svg>
            <svg viewBox="0 0 24 22" className="ml-3 h-[22px] w-6" fill="none" stroke="#fff" strokeWidth="1.3"><path d="M1 7h4l6-5v18l-6-5H1zM14 8q2 3 0 6M17 5q4 6 0 12M20 2q6 9 0 18" /></svg>
            <span className="ml-3 font-medium">英</span>
            <div className="ml-[10px] w-[62px] overflow-hidden text-[19px] leading-[28px]">
                <p className="pl-7">23:2</p>
                <p>2021/1</p>
            </div>
        </div>
    </footer>
);

const App = () => (
    <div className="relative flex h-screen flex-col overflow-hidden bg-[#f4f4f4] font-['Open_Sans','Noto_Sans_CJK_SC',sans-serif] text-[18px] leading-[24px] text-[#1c1c1c]">
        <svg className="absolute h-0 w-0" aria-hidden="true">
            <linearGradient id="paneFill" x1="0" y1="0" x2="0" y2="1">
                <stop offset="0" stopColor="#0d5c9e" />
                <stop offset="0.6" stopColor="#245a86" />
                <stop offset="1" stopColor="#2f9ae0" />
            </linearGradient>
        </svg>
        <header className="flex h-[35px] shrink-0 items-center bg-[#fdfdfd] text-[#808080]">
            <h1 className="-ml-1 flex-1 pb-[2px]">AE 2020 [Viewport: 1]</h1>
            <button type="button" aria-label="Minimize" className="mr-10 h-4 w-4 border-b border-[#999]"></button>
        </header>
        <MenuBar />
        <div className="shrink-0 bg-gradient-to-r from-[#fafafa] to-[#ededed]">
            <TopTools />
            <ViewTools />
        </div>
        <main className="flex min-h-0 flex-1 bg-[#fbfbfb]">
            <ModelTree />
            <Workspace />
        </main>
        <BottomTools />
        <div className="flex h-[50px] shrink-0 bg-gradient-to-r from-[#fbfbfb] to-[#ededed] pb-2 pl-[150px]">
            <Group>
                <ToolButton label="Message area">
                    <Ico><circle cx="16" cy="16" r="15" fill="#3d70b8" stroke="#28508e" /><text x="11" y="26" fontSize="27" fontWeight="700" fontStyle="italic" fill="#fff" fontFamily='"Liberation Serif", serif'>i</text></Ico>
                </ToolButton>
            </Group>
        </div>
        <MessageArea />
        <Taskbar />
        <SetManager />
        <ConnectorDialog />
        <BusyCursor />
    </div>
);

export default App;
